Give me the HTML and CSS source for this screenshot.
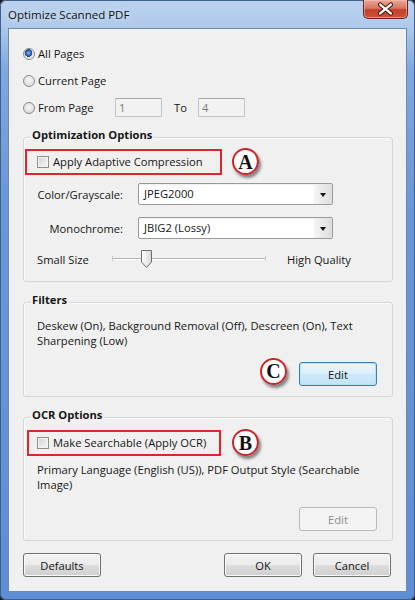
FILE: index.html
```html
<!DOCTYPE html>
<html>
<head>
<meta charset="utf-8">
<link rel="stylesheet" href="styles.css">
</head>
<body>
<div class="window">
  <div class="titlebar">
    <span class="title">Optimize Scanned PDF</span>
    <div class="close">
      <svg width="45" height="19" viewBox="0 0 45 19">
        <path d="M17.5 5.5 L28.5 14.5 M28.5 5.5 L17.5 14.5" stroke="#4a1208" stroke-width="4.5" stroke-linecap="round" fill="none"/>
        <path d="M17.5 5.5 L28.5 14.5 M28.5 5.5 L17.5 14.5" stroke="#ffffff" stroke-width="2.4" stroke-linecap="round" fill="none"/>
      </svg>
    </div>
  </div>
  <div class="client">
    <div class="pages">
      <div class="radio-row"><span class="radio checked"></span><span>All Pages</span></div>
      <div class="radio-row"><span class="radio"></span><span>Current Page</span></div>
      <div class="radio-row">
        <span class="radio"></span><span class="from">From Page</span>
        <span class="numbox">1</span><span class="to">To</span><span class="numbox">4</span>
      </div>
    </div>

    <fieldset class="group opt">
      <legend>Optimization Options</legend>
      <div class="mark-row mark-a">
        <div class="hl hl-a"><span class="check"></span><span>Apply Adaptive Compression</span></div>
        <span class="badge">A</span>
      </div>
      <div class="field first">
        <span class="lbl">Color/Grayscale:</span>
        <div class="select"><span class="val">JPEG2000</span><span class="arrow"><i></i></span></div>
      </div>
      <div class="field second">
        <span class="lbl">Monochrome:</span>
        <div class="select"><span class="val">JBIG2 (Lossy)</span><span class="arrow"><i></i></span></div>
      </div>
      <div class="slider-row">
        <span class="small">Small Size</span>
        <div class="track">
          <svg width="158" height="20" viewBox="0 0 158 20">
            <line x1="2" y1="9.5" x2="156" y2="9.5" stroke="#b4b4b4" stroke-width="1"/>
            <line x1="2" y1="10.5" x2="156" y2="10.5" stroke="#ffffff" stroke-width="1"/>
            <line x1="2.5" y1="7" x2="2.5" y2="12" stroke="#c8c8c8" stroke-width="1"/>
            <line x1="155.5" y1="7" x2="155.5" y2="12" stroke="#c8c8c8" stroke-width="1"/>
            <defs>
              <linearGradient id="th" x1="0" y1="0" x2="1" y2="0">
                <stop offset="0" stop-color="#ffffff"/>
                <stop offset="1" stop-color="#d8d8d8"/>
              </linearGradient>
            </defs>
            <path d="M31.5 1.5 H41.5 V13 L36.5 18.5 L31.5 13 Z" fill="url(#th)" stroke="#6f6f6f" stroke-width="1"/>
          </svg>
        </div>
        <span class="hq">High Quality</span>
      </div>
    </fieldset>

    <fieldset class="group filters">
      <legend>Filters</legend>
      <p class="desc">Deskew (On), Background Removal (Off), Descreen (On), Text Sharpening (Low)</p>
      <div class="edit-row">
        <span class="badge badge-c">C</span>
        <div class="btn focus">Edit</div>
      </div>
    </fieldset>

    <fieldset class="group ocr">
      <legend>OCR Options</legend>
      <div class="mark-row mark-b">
        <div class="hl hl-b"><span class="check"></span><span>Make Searchable (Apply OCR)</span></div>
        <span class="badge">B</span>
      </div>
      <p class="desc desc-ocr">Primary Language (English (US)), PDF Output Style (Searchable Image)</p>
      <div class="edit-row edit-ocr">
        <div class="btn disabled">Edit</div>
      </div>
    </fieldset>

    <div class="footer">
      <div class="btn">Defaults</div>
      <div class="spacer"></div>
      <div class="btn">OK</div>
      <div class="btn">Cancel</div>
    </div>
  </div>
</div>
</body>
</html>
```

FILE: styles.css
```css
* { box-sizing: border-box; }
html, body { margin: 0; padding: 0; }
body {
  background: #1d1d1d;
  width: 415px;
  height: 600px;
  overflow: hidden;
  font-family: "Open Sans", "Noto Sans", sans-serif;
  font-size: 11.2px;
  color: #161616;
}
.window {
  width: 415px;
  height: 600px;
  border-radius: 6px;
  display: flex;
  flex-direction: column;
  background: linear-gradient(180deg, #bcd3ee 0px, #afc9ea 26px, #7fa8de 70px, #6a97d6 200px, #5e8ed3 100%);
  box-shadow: inset 0 0 0 1px #3e5f8c;
}
.titlebar {
  height: 28px;
  display: flex;
  justify-content: space-between;
  align-items: flex-start;
  padding-left: 8px;
}
.title {
  margin-top: 7px;
  font-size: 11.5px;
  line-height: 16px;
  color: #111;
  text-shadow: 0 0 6px rgba(255,255,255,0.8);
}
.close {
  width: 45px;
  height: 19px;
  margin-right: 7px;
  border: 1px solid #6b2419;
  border-top: none;
  border-radius: 0 0 5px 5px;
  background: linear-gradient(180deg, #e9a797 0%, #d77662 45%, #c33f28 55%, #c9553a 100%);
  box-shadow: inset 0 0 0 1px rgba(255,200,190,0.5);
  display: flex;
}
.close svg { display: block; margin: -1px 0 0 -1px; }
.client {
  margin: 0 8px 8px 8px;
  flex: 1;
  border: 1px solid #6c89ae;
  background: #f0f0f0;
  display: flex;
  flex-direction: column;
}
.pages { padding: 11px 0 0 14px; }
.radio-row {
  height: 27px;
  display: flex;
  align-items: center;
}
.radio {
  width: 12px;
  height: 12px;
  border-radius: 50%;
  border: 1px solid #8a8a8a;
  background: radial-gradient(circle at 50% 40%, #f6f6f6 0%, #e2e2e2 60%, #cfcfcf 100%);
  margin-right: 3px;
  flex: none;
}
.radio.checked {
  background: radial-gradient(circle at 45% 40%, #9cc0ef 0%, #2f64b3 30%, #1f4c94 45%, #e6e6e6 50%, #f4f4f4 100%);
}
.from { width: 77px; }
.numbox {
  width: 47px;
  height: 19px;
  border: 1px solid #c2c6cc;
  border-top-color: #a7abb0;
  background: #f2f2f2;
  color: #7a7a7a;
  padding-left: 3px;
  line-height: 17px;
}
.to { width: 36px; padding-left: 12px; }

.group {
  margin: 6px 13px 0 14px;
  padding: 0 0 12px 0;
  border: 1px solid #d6d6d6;
  border-radius: 3px;
  min-width: 0;
  box-shadow: inset 1px 1px 0 #fbfbfb;
}
.group legend {
  margin-left: 7px;
  padding: 0 2px 4px 1px;
  font-weight: bold;
  line-height: 16px;
}
.filters { margin-top: 10px; padding-bottom: 10px; }
.ocr { margin-top: 10px; padding-bottom: 9px; }

.mark-row {
  display: flex;
  align-items: center;
}
.mark-a { margin: 1px 0 0 1px; gap: 10px; }
.mark-b { margin: 2px 0 0 3px; gap: 11px; }
.hl {
  height: 26px;
  border: 2px solid #e0262b;
  display: flex;
  align-items: center;
  flex: none;
}
.hl-a { width: 197px; padding-left: 10px; }
.hl-b { width: 194px; padding-left: 8px; }
.check {
  width: 12px;
  height: 12px;
  border: 1px solid #8e8f8f;
  background: linear-gradient(135deg, #d2d2d2 0%, #e9e9e9 60%, #f7f7f7 100%);
  box-shadow: inset 0 0 0 1px #f4f4f4;
  margin-right: 4px;
  flex: none;
}
.badge {
  width: 27px;
  height: 27px;
  border-radius: 50%;
  border: 2px solid #c8262b;
  background: radial-gradient(circle at 40% 35%, #ffffff 0%, #ffffff 55%, #e9e9e9 100%);
  box-shadow: 2px 3px 3px rgba(0,0,0,0.45);
  display: flex;
  align-items: center;
  justify-content: center;
  font-family: "Liberation Serif", "DejaVu Serif", serif;
  font-weight: bold;
  font-size: 20px;
  line-height: 1;
  color: #111;
  flex: none;
}

.field {
  display: flex;
  align-items: center;
}
.field.first { margin-top: 8px; }
.field.second { margin-top: 12px; }
.lbl {
  width: 86px;
  margin-left: 13px;
  text-align: right;
  white-space: nowrap;
}
.select {
  margin-left: 15px;
  width: 195px;
  height: 22px;
  display: flex;
  border: 1px solid #9a9a9a;
  border-radius: 2px;
  background: #fff;
  box-shadow: inset 0 1px 1px rgba(0,0,0,0.06);
}
.select .val { flex: 1; padding-left: 5px; line-height: 20px; }
.select .arrow {
  width: 18px;
  background: linear-gradient(90deg, #f4f4f4 0%, #dedede 100%);
  display: flex;
  align-items: center;
  justify-content: center;
  border-radius: 0 1px 1px 0;
}
.select .arrow i {
  display: block;
  width: 0;
  height: 0;
  border-left: 3.5px solid transparent;
  border-right: 3.5px solid transparent;
  border-top: 4px solid #111;
  margin-top: 1px;
}
.slider-row {
  margin-top: 10px;
  height: 20px;
  display: flex;
  align-items: center;
  padding-left: 13px;
}
.small { width: 73px; }
.track { width: 158px; height: 20px; }
.track svg { display: block; }
.hq { margin-left: 19px; }

.desc {
  margin: 6px 13px 0 13px;
  line-height: 15px;
}
.desc-ocr { margin-top: 6px; }
.edit-row {
  display: flex;
  justify-content: flex-end;
  align-items: center;
  gap: 12px;
  margin-top: 14px;
  padding-right: 15px;
}
.edit-ocr { margin-top: 15px; }
.badge-c { margin: -6px 0 0 0; }

.btn {
  width: 78px;
  height: 24px;
  border: 1px solid #707070;
  border-radius: 3px;
  background: linear-gradient(180deg, #f2f2f2 0%, #ebebeb 48%, #dddddd 52%, #cfcfcf 100%);
  box-shadow: inset 0 0 0 1px #fafafa;
  display: flex;
  align-items: center;
  justify-content: center;
  flex: none;
}
.btn.focus {
  border-color: #3c7fb1;
  background: linear-gradient(180deg, #eaf6fd 0%, #dcf0fb 48%, #cde9f8 52%, #c3e4f6 100%);
  box-shadow: inset 0 0 0 1px #b7e2f6;
}
.btn.disabled {
  border-color: #b6babd;
  background: #f4f4f4;
  color: #8d8d8d;
  box-shadow: none;
}
.footer {
  display: flex;
  margin-top: 12px;
  padding: 0 15px 0 14px;
  gap: 11px;
}
.spacer { flex: 1; }
```
